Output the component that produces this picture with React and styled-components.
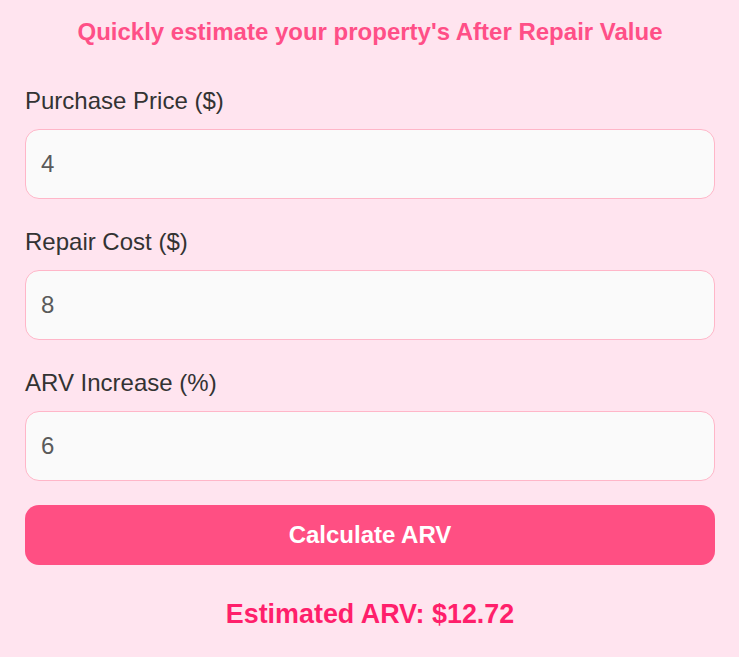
import { useState } from 'react';
import styled, { createGlobalStyle } from 'styled-components';

const GlobalStyle = createGlobalStyle`
  html, body {
    margin: 0;
    padding: 0;
    background-color: #ffe4ef;
  }
  body {
    font-family: "Liberation Sans", Arial, sans-serif;
  }
`;

const Container = styled.div`
  width: 739px;
  box-sizing: border-box;
  padding: 18px 24px 0 25px;
  display: flex;
  flex-direction: column;
`;

const Subtitle = styled.p`
  margin: 0 0 41px;
  text-align: center;
  font-size: 24px;
  font-weight: bold;
  color: #ff4f87;
  line-height: 28px;
`;

const Field = styled.div`
  display: flex;
  flex-direction: column;
  margin-bottom: ${(p) => (p.$last ? '24px' : '29px')};
`;

const Label = styled.label`
  font-size: 24px;
  line-height: 28px;
  color: #333;
  margin-bottom: 14px;
`;

const Input = styled.input`
  box-sizing: border-box;
  height: 70px;
  width: 100%;
  padding: 0 15px;
  font-family: "Liberation Sans", Arial, sans-serif;
  font-size: 24px;
  color: #5a5a5a;
  background-color: #fafafa;
  border: 1px solid #ffb6c8;
  border-radius: 14px;
  outline: none;
`;

const Button = styled.button`
  height: 60px;
  width: 100%;
  border: none;
  border-radius: 14px;
  background-color: #ff4f83;
  color: white;
  font-family: "Liberation Sans", Arial, sans-serif;
  font-size: 24px;
  font-weight: bold;
  cursor: pointer;

  &:hover {
    background-color: #ff3b74;
  }
`;

const Result = styled.div`
  margin-top: 34px;
  text-align: center;
  font-size: 26.9px;
  line-height: 30px;
  font-weight: bold;
  color: #ff1f6b;
`;

const App = () => {
  const [price, setPrice] = useState('4');
  const [repair, setRepair] = useState('8');
  const [increase, setIncrease] = useState('6');
  const [arv, setArv] = useState(12.72);

  const calculate = () => {
    const base = (parseFloat(price) || 0) + (parseFloat(repair) || 0);
    setArv(base * (1 + (parseFloat(increase) || 0) / 100));
  };

  return (
    <>
      <GlobalStyle />
      <Container>
        <Subtitle>Quickly estimate your property's After Repair Value</Subtitle>
        <Field>
          <Label>Purchase Price ($)</Label>
          <Input type="number" value={price} onChange={(e) => setPrice(e.target.value)} />
        </Field>
        <Field>
          <Label>Repair Cost ($)</Label>
          <Input type="number" value={repair} onChange={(e) => setRepair(e.target.value)} />
        </Field>
        <Field $last>
          <Label>ARV Increase (%)</Label>
          <Input type="number" value={increase} onChange={(e) => setIncrease(e.target.value)} />
        </Field>
        <Button onClick={calculate}>Calculate ARV</Button>
        <Result>Estimated ARV: ${arv.toFixed(2)}</Result>
      </Container>
    </>
  );
};

export default App;
